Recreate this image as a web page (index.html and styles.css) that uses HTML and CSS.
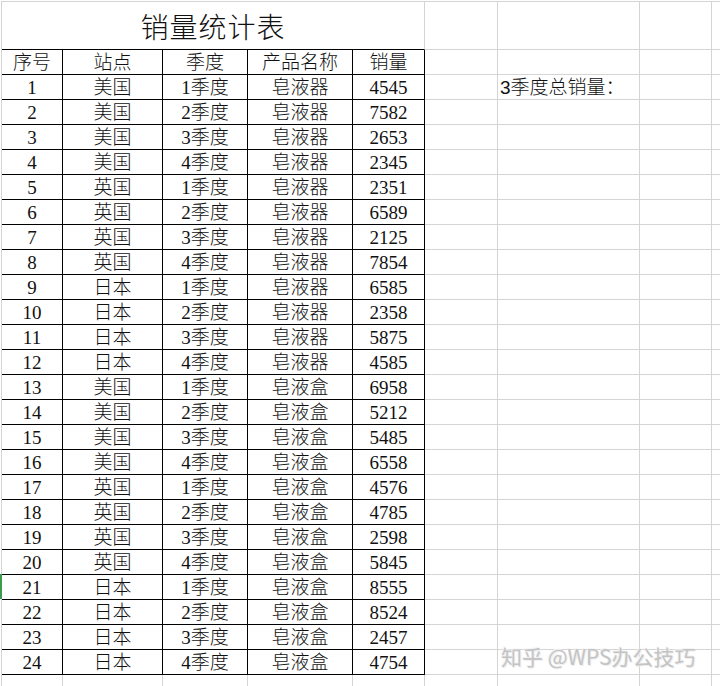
FILE: index.html
```html
<!DOCTYPE html>
<html lang="zh">
<head>
<meta charset="utf-8">
<link rel="stylesheet" href="styles.css">
</head>
<body>
<div class="sheet">
<div class="c title">销量统计表</div><div class="c"></div><div class="c"></div><div class="c"></div><div class="c"></div>
<div class="c k">序号</div><div class="c k">站点</div><div class="c k">季度</div><div class="c k">产品名称</div><div class="c k">销量</div><div class="c"></div><div class="c"></div><div class="c"></div><div class="c"></div>
<div class="c k">1</div><div class="c k">美国</div><div class="c k">1季度</div><div class="c k">皂液器</div><div class="c k">4545</div><div class="c"></div><div class="c note">3季度总销量：</div><div class="c"></div><div class="c"></div>
<div class="c k">2</div><div class="c k">美国</div><div class="c k">2季度</div><div class="c k">皂液器</div><div class="c k">7582</div><div class="c"></div><div class="c"></div><div class="c"></div><div class="c"></div>
<div class="c k">3</div><div class="c k">美国</div><div class="c k">3季度</div><div class="c k">皂液器</div><div class="c k">2653</div><div class="c"></div><div class="c"></div><div class="c"></div><div class="c"></div>
<div class="c k">4</div><div class="c k">美国</div><div class="c k">4季度</div><div class="c k">皂液器</div><div class="c k">2345</div><div class="c"></div><div class="c"></div><div class="c"></div><div class="c"></div>
<div class="c k">5</div><div class="c k">英国</div><div class="c k">1季度</div><div class="c k">皂液器</div><div class="c k">2351</div><div class="c"></div><div class="c"></div><div class="c"></div><div class="c"></div>
<div class="c k">6</div><div class="c k">英国</div><div class="c k">2季度</div><div class="c k">皂液器</div><div class="c k">6589</div><div class="c"></div><div class="c"></div><div class="c"></div><div class="c"></div>
<div class="c k">7</div><div class="c k">英国</div><div class="c k">3季度</div><div class="c k">皂液器</div><div class="c k">2125</div><div class="c"></div><div class="c"></div><div class="c"></div><div class="c"></div>
<div class="c k">8</div><div class="c k">英国</div><div class="c k">4季度</div><div class="c k">皂液器</div><div class="c k">7854</div><div class="c"></div><div class="c"></div><div class="c"></div><div class="c"></div>
<div class="c k">9</div><div class="c k">日本</div><div class="c k">1季度</div><div class="c k">皂液器</div><div class="c k">6585</div><div class="c"></div><div class="c"></div><div class="c"></div><div class="c"></div>
<div class="c k">10</div><div class="c k">日本</div><div class="c k">2季度</div><div class="c k">皂液器</div><div class="c k">2358</div><div class="c"></div><div class="c"></div><div class="c"></div><div class="c"></div>
<div class="c k">11</div><div class="c k">日本</div><div class="c k">3季度</div><div class="c k">皂液器</div><div class="c k">5875</div><div class="c"></div><div class="c"></div><div class="c"></div><div class="c"></div>
<div class="c k">12</div><div class="c k">日本</div><div class="c k">4季度</div><div class="c k">皂液器</div><div class="c k">4585</div><div class="c"></div><div class="c"></div><div class="c"></div><div class="c"></div>
<div class="c k">13</div><div class="c k">美国</div><div class="c k">1季度</div><div class="c k">皂液盒</div><div class="c k">6958</div><div class="c"></div><div class="c"></div><div class="c"></div><div class="c"></div>
<div class="c k">14</div><div class="c k">美国</div><div class="c k">2季度</div><div class="c k">皂液盒</div><div class="c k">5212</div><div class="c"></div><div class="c"></div><div class="c"></div><div class="c"></div>
<div class="c k">15</div><div class="c k">美国</div><div class="c k">3季度</div><div class="c k">皂液盒</div><div class="c k">5485</div><div class="c"></div><div class="c"></div><div class="c"></div><div class="c"></div>
<div class="c k">16</div><div class="c k">美国</div><div class="c k">4季度</div><div class="c k">皂液盒</div><div class="c k">6558</div><div class="c"></div><div class="c"></div><div class="c"></div><div class="c"></div>
<div class="c k">17</div><div class="c k">英国</div><div class="c k">1季度</div><div class="c k">皂液盒</div><div class="c k">4576</div><div class="c"></div><div class="c"></div><div class="c"></div><div class="c"></div>
<div class="c k">18</div><div class="c k">英国</div><div class="c k">2季度</div><div class="c k">皂液盒</div><div class="c k">4785</div><div class="c"></div><div class="c"></div><div class="c"></div><div class="c"></div>
<div class="c k">19</div><div class="c k">英国</div><div class="c k">3季度</div><div class="c k">皂液盒</div><div class="c k">2598</div><div class="c"></div><div class="c"></div><div class="c"></div><div class="c"></div>
<div class="c k">20</div><div class="c k">英国</div><div class="c k">4季度</div><div class="c k">皂液盒</div><div class="c k">5845</div><div class="c"></div><div class="c"></div><div class="c"></div><div class="c"></div>
<div class="c k">21</div><div class="c k">日本</div><div class="c k">1季度</div><div class="c k">皂液盒</div><div class="c k">8555</div><div class="c"></div><div class="c"></div><div class="c"></div><div class="c"></div>
<div class="c k">22</div><div class="c k">日本</div><div class="c k">2季度</div><div class="c k">皂液盒</div><div class="c k">8524</div><div class="c"></div><div class="c"></div><div class="c"></div><div class="c"></div>
<div class="c k">23</div><div class="c k">日本</div><div class="c k">3季度</div><div class="c k">皂液盒</div><div class="c k">2457</div><div class="c"></div><div class="c"></div><div class="c"></div><div class="c"></div>
<div class="c k">24</div><div class="c k">日本</div><div class="c k">4季度</div><div class="c k">皂液盒</div><div class="c k">4754</div><div class="c"></div><div class="c"></div><div class="c"></div><div class="c"></div>
<div class="c"></div><div class="c"></div><div class="c"></div><div class="c"></div><div class="c"></div><div class="c"></div><div class="c"></div><div class="c"></div><div class="c"></div>
</div>
<div class="sel-mark"></div>
<div class="watermark">知乎 @WPS办公技巧</div>
</body>
</html>
```

FILE: styles.css
```css
html, body {
  margin: 0;
  padding: 0;
  overflow: hidden;
  background: #fff;
  width: 720px;
  height: 686px;
}

body {
  position: relative;
  font-family: "Liberation Serif", "Noto Sans CJK SC", serif;
  font-size: 19px;
  font-weight: 300;
  color: #111;
}

.sheet {
  display: grid;
  grid-template-columns: 61px 100px 85px 105px 72px 73px 142px 72px 40px;
  grid-template-rows: 48px;
  grid-auto-rows: 25px;
  margin: 1px 0 0 1px;
  border-top: 1px solid #d4d4d4;
  border-left: 1px solid #d4d4d4;
  width: max-content;
}

.c {
  box-sizing: border-box;
  border-right: 1px solid #d4d4d4;
  border-bottom: 1px solid #d4d4d4;
  display: flex;
  align-items: center;
  justify-content: center;
  white-space: nowrap;
  line-height: 1;
}

.k {
  border-right-color: #000;
  border-bottom-color: #000;
}

.title {
  grid-column: span 5;
  border-bottom-color: #000;
  font-size: 28px;
  padding-top: 6px;
  letter-spacing: 1px;
}

.note {
  justify-content: flex-start;
  padding-left: 2px;
  font-family: "Liberation Sans", "Noto Sans CJK SC", sans-serif;
  font-size: 19px;
}

.sel-mark {
  position: absolute;
  left: 0;
  top: 574px;
  width: 2px;
  height: 25px;
  background: #3d9a4f;
}

.watermark {
  position: absolute;
  left: 501px;
  top: 643px;
  font-family: "Noto Sans CJK SC", sans-serif;
  font-size: 21px;
  font-weight: 400;
  line-height: 26px;
  color: #c4c4c4;
  text-shadow: 1px 1px 0 #eeeeee, -1px -1px 0 #f4f4f4;
  white-space: nowrap;
}
```
